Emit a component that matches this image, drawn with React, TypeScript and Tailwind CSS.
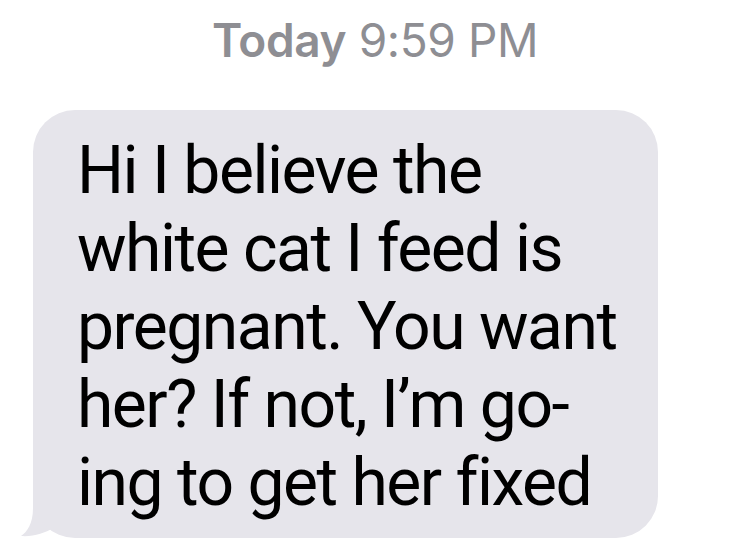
export default function App() {
  const lines = [
    'Hi I believe the',
    'white cat I feed is',
    'pregnant. You want',
    'her? If not, I\u2019m go-',
    'ing to get her fixed',
  ];

  return (
    <div
      className="w-[750px] h-[542px] bg-white overflow-hidden"
      style={{ fontFamily: 'Inter, "Noto Sans", sans-serif' }}
    >
      {/* Timestamp */}
      <div className="pt-[14px] text-center text-[46px] leading-[52px] text-[#8e8e93] tracking-[-0.4px]">
        <span className="font-semibold">Today</span> 9:59 PM
      </div>

      {/* Incoming bubble */}
      <div className="relative ml-[33px] mt-[44px] w-[625px] h-[428px]">
        <svg
          className="absolute left-[-12px] bottom-0"
          width="70"
          height="50"
          viewBox="0 0 70 50"
        >
          <path
            d="M12 0 L12 20 C12 36 6 44 0 48 C12 49 24 45 32 40 C40 44 48 46 60 46 L60 0 Z"
            fill="#e6e5eb"
          />
        </svg>
        <div
          className="relative h-full rounded-[42px] bg-[#e6e5eb] pl-[44px] pt-[22px] text-[66px] leading-[78px] text-black tracking-[-1.5px]"
          style={{ fontFamily: 'Roboto, "Noto Sans", sans-serif' }}
        >
          {lines.map((l) => (
            <div key={l} className="whitespace-nowrap">
              {l}
            </div>
          ))}
        </div>
      </div>
    </div>
  );
}
